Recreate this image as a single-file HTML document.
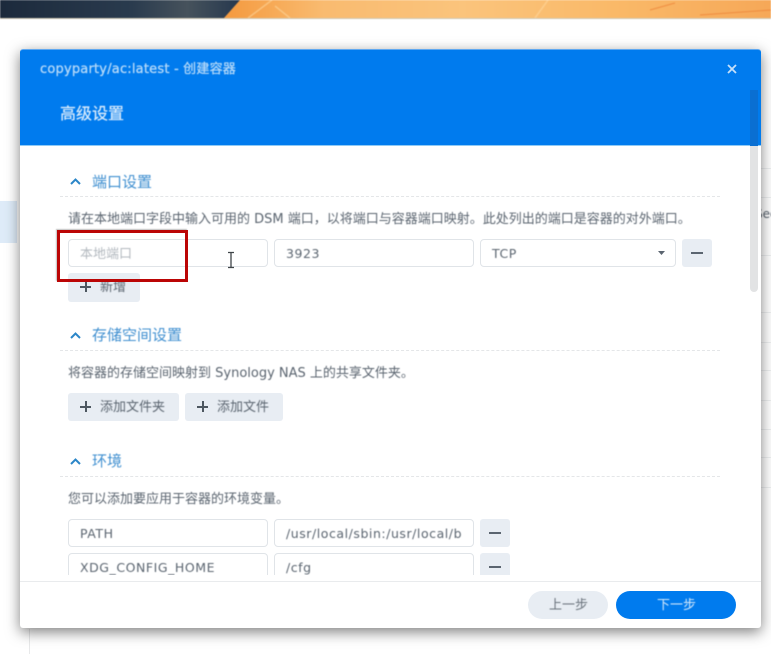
<!DOCTYPE html>
<html lang="zh">
<head>
<meta charset="utf-8">
<style>
*{box-sizing:border-box}
html,body{margin:0;padding:0;background:#fff}
body{width:771px;height:654px;position:relative;overflow:hidden;font-family:"DejaVu Sans","Noto Sans CJK SC",sans-serif;color:#5b6570}
.a{position:absolute}
.t{position:absolute;white-space:nowrap;font-size:13px;line-height:16px;filter:blur(.5px)}
.f{font-size:12.5px;letter-spacing:.55px}
.dlg{position:absolute;left:20px;top:49px;width:741px;height:579px;background:#fff;border-radius:3px;box-shadow:0 4px 14px rgba(0,0,0,.5)}
.inp{position:absolute;height:28px;background:#fff;border:1px solid #e0e4e8;border-radius:4px}
.btn{position:absolute;background:#e8edf3;border-radius:3px}
.sec{position:absolute;left:92px;font-size:15px;line-height:18px;color:#3f8fd0;white-space:nowrap;filter:blur(.5px)}
.dash{position:absolute;left:60px;width:660px;border-top:1px dashed #e4e6e8;height:0}
.line{position:absolute;left:733px;width:38px;height:1px;background:#eef0f1}
</style>
</head>
<body>
<svg class="a" style="left:0;top:0;filter:blur(.5px)" width="771" height="19" viewBox="0 0 771 19">
<defs>
<linearGradient id="o" x1="0" x2="1" y1="0" y2="0">
<stop offset="0" stop-color="#f59a3c"/><stop offset=".3" stop-color="#f59c42"/><stop offset=".42" stop-color="#f9bb70"/><stop offset=".6" stop-color="#fbc47c"/><stop offset=".8" stop-color="#fab968"/><stop offset="1" stop-color="#f6a858"/>
</linearGradient>
<linearGradient id="d" x1="0" x2="1" y1="0" y2="0">
<stop offset="0" stop-color="#1c2a3c"/><stop offset=".55" stop-color="#2a3b4e"/><stop offset=".78" stop-color="#46525c"/><stop offset="1" stop-color="#26384e"/>
</linearGradient>
</defs>
<rect width="771" height="18" fill="url(#o)"/>
<path d="M0 0H240L224 18H0Z" fill="url(#d)"/>
<path d="M272 0L248 18M275 6L290 18M535 18L548 0" stroke="#fdd9a0" stroke-width="1.5" fill="none" opacity=".55"/>
<path d="M650 10L675 3M700 15L771 10" stroke="#e9762c" stroke-width="1.2" fill="none" opacity=".5"/>
<rect y="18" width="771" height="1" fill="#cfc8b4"/>
</svg>

<div class="a" style="left:0;top:201px;width:17px;height:42px;background:#deebf8"></div>
<div class="line" style="top:168px"></div>
<div class="line" style="top:197px"></div>
<div class="line" style="top:255px"></div>
<div class="line" style="top:312px"></div>
<div class="line" style="top:342px"></div>
<div class="line" style="top:370px"></div>
<div class="line" style="top:400px"></div>
<div class="line" style="top:429px"></div>
<div class="line" style="top:457px"></div>
<div class="line" style="top:487px"></div>
<div class="a" style="left:29px;top:629px;width:1px;height:25px;background:#e8e9ea"></div>
<div class="t" style="left:755px;top:206px;font-size:12px">Sec</div>

<div class="dlg"></div>
<div class="a" style="left:20px;top:49px;width:741px;height:97px;background:#007bee;border-radius:3px 3px 0 0;border-top:1px solid #5fa8f0;border-bottom:1px solid #8fcaf5"></div>
<div class="a" style="left:750px;top:90px;width:8px;height:56px;background:#0a6fd2"></div>
<div class="a" style="left:750px;top:146px;width:8px;height:146px;background:#e2e3e4;border-radius:0 0 4px 4px"></div>

<div class="t" style="left:40px;top:61px;color:#b6daf9;letter-spacing:.2px;line-height:17px;-webkit-text-stroke:.3px #b6daf9">copyparty/ac:latest - 创建容器</div>
<svg class="a" style="left:727px;top:64px" width="10" height="10" viewBox="0 0 10 10"><path d="M1 1L9 9M9 1L1 9" stroke="#c5e0fa" stroke-width="1.8"/></svg>
<div class="t" style="left:60px;top:104px;color:#dcedfc;font-size:16px;line-height:20px;-webkit-text-stroke:.2px #dcedfc">高级设置</div>

<!-- Port settings -->
<svg class="a" style="left:69px;top:177px" width="13" height="9" viewBox="0 0 13 9"><path d="M2 7L6.5 2.5L11 7" stroke="#2b86c8" stroke-width="2" fill="none"/></svg>
<div class="sec" style="top:173px">端口设置</div>
<div class="dash" style="top:196px"></div>
<div class="t" style="left:68px;top:212px">请在本地端口字段中输入可用的 DSM 端口，以将端口与容器端口映射。此处列出的端口是容器的对外端口。</div>
<div class="inp" style="left:68px;top:239px;width:200px"></div>
<div class="t" style="left:80px;top:247px;color:#b3b9bf">本地端口</div>
<div class="inp" style="left:274px;top:239px;width:200px"></div>
<div class="t f" style="left:286px;top:246px">3923</div>
<div class="inp" style="left:480px;top:239px;width:196px"></div>
<div class="t f" style="left:492px;top:246px">TCP</div>
<svg class="a" style="left:657px;top:250px" width="9" height="6" viewBox="0 0 9 6"><path d="M1 1H8L4.5 5Z" fill="#5b6570"/></svg>
<div class="btn" style="left:682px;top:239px;width:30px;height:28px"></div>
<div class="a" style="left:691px;top:252px;width:12px;height:2px;background:#5b6570"></div>

<div class="btn" style="left:68px;top:273px;width:72px;height:29px"></div>
<div class="a" style="left:80px;top:286px;width:11px;height:1.5px;background:#4d5760"></div>
<div class="a" style="left:85px;top:281px;width:1.5px;height:11px;background:#4d5760"></div>
<div class="t" style="left:100px;top:280px">新增</div>

<div class="a" style="left:57px;top:230px;width:131px;height:52px;border:3px solid #bb0505;box-shadow:-1px -1px 1px rgba(0,0,0,.25)"></div>

<svg class="a" style="left:226px;top:251px" width="10" height="18" viewBox="0 0 10 18"><path d="M2 1.5H8M5 1.5V16.5M2 16.5H8" stroke="#3f4448" stroke-width="1.3" fill="none"/></svg>

<!-- Storage settings -->
<svg class="a" style="left:69px;top:331px" width="13" height="9" viewBox="0 0 13 9"><path d="M2 7L6.5 2.5L11 7" stroke="#2b86c8" stroke-width="2" fill="none"/></svg>
<div class="sec" style="top:326px">存储空间设置</div>
<div class="dash" style="top:350px"></div>
<div class="t" style="left:68px;top:366px">将容器的存储空间映射到 Synology NAS 上的共享文件夹。</div>
<div class="btn" style="left:68px;top:393px;width:111px;height:28px"></div>
<div class="a" style="left:80px;top:406px;width:11px;height:1.5px;background:#4d5760"></div>
<div class="a" style="left:85px;top:401px;width:1.5px;height:11px;background:#4d5760"></div>
<div class="t" style="left:100px;top:400px">添加文件夹</div>
<div class="btn" style="left:185px;top:393px;width:98px;height:28px"></div>
<div class="a" style="left:197px;top:406px;width:11px;height:1.5px;background:#4d5760"></div>
<div class="a" style="left:202px;top:401px;width:1.5px;height:11px;background:#4d5760"></div>
<div class="t" style="left:217px;top:400px">添加文件</div>

<!-- Environment -->
<svg class="a" style="left:69px;top:457px" width="13" height="9" viewBox="0 0 13 9"><path d="M2 7L6.5 2.5L11 7" stroke="#2b86c8" stroke-width="2" fill="none"/></svg>
<div class="sec" style="top:452px">环境</div>
<div class="dash" style="top:476px"></div>
<div class="t" style="left:68px;top:492px">您可以添加要应用于容器的环境变量。</div>
<div class="inp" style="left:68px;top:519px;width:200px"></div>
<div class="t f" style="left:80px;top:526px">PATH</div>
<div class="inp" style="left:274px;top:519px;width:200px"></div>
<div class="t f" style="left:286px;top:526px;width:178px;overflow:hidden">/usr/local/sbin:/usr/local/b</div>
<div class="btn" style="left:480px;top:519px;width:30px;height:28px"></div>
<div class="a" style="left:489px;top:532px;width:12px;height:2px;background:#5b6570"></div>

<div class="a" style="left:60px;top:553px;width:660px;height:22px;overflow:hidden">
  <div class="inp" style="left:8px;top:0;width:200px"></div>
  <div class="t f" style="left:20px;top:7px">XDG_CONFIG_HOME</div>
  <div class="inp" style="left:214px;top:0;width:200px"></div>
  <div class="t f" style="left:226px;top:7px">/cfg</div>
  <div class="btn" style="left:420px;top:0;width:30px;height:28px"></div>
  <div class="a" style="left:429px;top:13px;width:12px;height:2px;background:#5b6570"></div>
</div>

<!-- Footer -->
<div class="a" style="left:20px;top:581px;width:741px;height:1px;background:#e9ebed"></div>
<div class="a" style="left:528px;top:591px;width:80px;height:28px;border-radius:14px;background:#e8edf3"></div>
<div class="t" style="left:549px;top:598px;color:#6a737c">上一步</div>
<div class="a" style="left:616px;top:591px;width:120px;height:28px;border-radius:14px;background:#007bee"></div>
<div class="t" style="left:657px;top:598px;color:#d5e9fb">下一步</div>
</body>
</html>
